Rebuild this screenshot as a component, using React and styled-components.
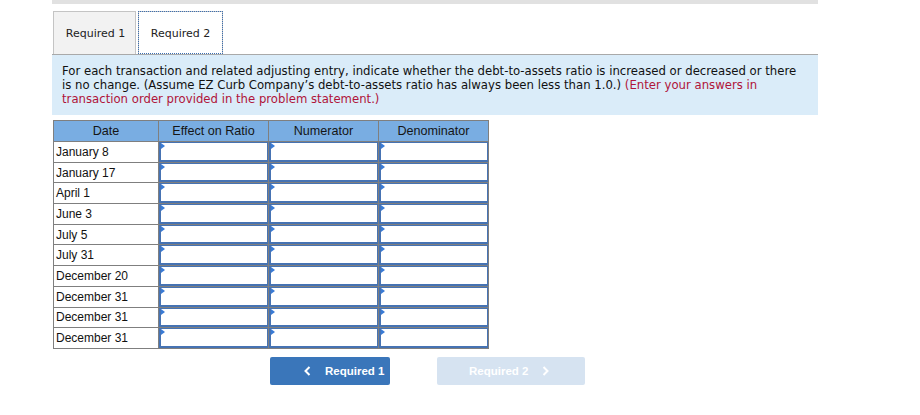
import React from "react";
import styled, { createGlobalStyle } from "styled-components";

const Global = createGlobalStyle`
  body {
    margin: 0;
    background: #ffffff;
    font-family: "DejaVu Sans", Verdana, sans-serif;
  }
`;

const Page = styled.div`
  width: 766px;
  margin-left: 52px;
`;

const TopBar = styled.div`
  height: 4px;
  background: #e1e1e1;
`;

const Tabs = styled.div`
  display: flex;
  gap: 2px;
  margin-top: 7px;
  padding-left: 1px;
`;

const Tab = styled.div`
  box-sizing: border-box;
  height: 43px;
  width: ${(p) => (p.active ? "85px" : "83px")};
  display: flex;
  align-items: center;
  justify-content: center;
  padding-left: ${(p) => (p.active ? "0" : "2px")};
  font-size: 11px;
  color: #222;
  background: ${(p) => (p.active ? "#ffffff" : "#f2f2f2")};
  border: 1px solid #c4c4c4;
  border-bottom: none;
  outline: ${(p) => (p.active ? "1px dotted #3b6fb1" : "none")};
  outline-offset: -1px;
`;

const Panel = styled.div`
  border-top: 1px solid #a9a9a9;
  background: #daecf9;
  padding: 9px 10px 9px;
  font-size: 11.7px;
  line-height: 14px;
  color: #111;
`;

const Line = styled.div`
  white-space: nowrap;
`;

const Hint = styled.span`
  color: #b0143a;
`;

const Table = styled.table`
  margin: 5px 0 0 1px;
  border-collapse: collapse;
  font-family: "Liberation Sans", Arial, sans-serif;
  font-size: 12px;
`;

const Th = styled.th`
  width: ${(p) => p.w}px;
  height: 20px;
  padding: 0;
  background: #79ade2;
  border: 1px solid #7f7f7f;
  font-weight: normal;
  font-size: 12.6px;
  color: #151515;
`;

const DateCell = styled.td`
  height: 19.7px;
  padding: 0 2px;
  border: 1px solid #7f7f7f;
  color: #111;
`;

const InputCell = styled.td`
  padding: 0;
  border: 1px solid #7f7f7f;
`;

const Field = styled.div`
  position: relative;
  box-sizing: border-box;
  height: 19.7px;
  border: 1px solid #4673b3;
  border-left-width: 2px;
  border-bottom-width: 2px;
  background: #fff;

  &::before {
    content: "";
    position: absolute;
    left: 0;
    top: 0;
    border-top: 3px solid transparent;
    border-bottom: 3px solid transparent;
    border-left: 4px solid #3a7bd5;
  }
`;

const Nav = styled.div`
  display: flex;
  gap: 47px;
  margin: 8px 0 0 218px;
`;

const NavButton = styled.div`
  box-sizing: border-box;
  width: ${(p) => p.w}px;
  height: 28px;
  display: flex;
  align-items: center;
  gap: 14px;
  padding-left: ${(p) => p.pad}px;
  border-radius: 2px;
  background: ${(p) => (p.disabled ? "#d6e3f1" : "#3a76ba")};
  color: #fff;
  font-family: "Liberation Sans", Arial, sans-serif;
  font-weight: bold;
  font-size: 11.5px;
`;

const Chevron = ({ dir }) => (
  <svg width="7" height="10" viewBox="0 0 7 10">
    <path
      d={dir === "left" ? "M5.5 1 L1.5 5 L5.5 9" : "M1.5 1 L5.5 5 L1.5 9"}
      fill="none"
      stroke="#fff"
      strokeWidth="2"
    />
  </svg>
);

const dates = [
  "January 8",
  "January 17",
  "April 1",
  "June 3",
  "July 5",
  "July 31",
  "December 20",
  "December 31",
  "December 31",
  "December 31",
];

export default function App() {
  return (
    <Page>
      <Global />
      <TopBar />
      <Tabs>
        <Tab>Required 1</Tab>
        <Tab active>Required 2</Tab>
      </Tabs>
      <Panel>
        <Line>
          For each transaction and related adjusting entry, indicate whether the debt-to-assets ratio is increased or decreased or there
        </Line>
        <Line>
          is no change. (Assume EZ Curb Company’s debt-to-assets ratio has always been less than 1.0.) <Hint>(Enter your answers in</Hint>
        </Line>
        <Line>
          <Hint>transaction order provided in the problem statement.)</Hint>
        </Line>
      </Panel>
      <Table>
        <thead>
          <tr>
            <Th w={104}>Date</Th>
            <Th w={109}>Effect on Ratio</Th>
            <Th w={109}>Numerator</Th>
            <Th w={109}>Denominator</Th>
          </tr>
        </thead>
        <tbody>
          {dates.map((d, i) => (
            <tr key={i}>
              <DateCell>{d}</DateCell>
              <InputCell><Field /></InputCell>
              <InputCell><Field /></InputCell>
              <InputCell><Field /></InputCell>
            </tr>
          ))}
        </tbody>
      </Table>
      <Nav>
        <NavButton w={120} pad={34}>
          <Chevron dir="left" />
          Required 1
        </NavButton>
        <NavButton w={148} pad={32} disabled>
          Required 2
          <Chevron dir="right" />
        </NavButton>
      </Nav>
    </Page>
  );
}
